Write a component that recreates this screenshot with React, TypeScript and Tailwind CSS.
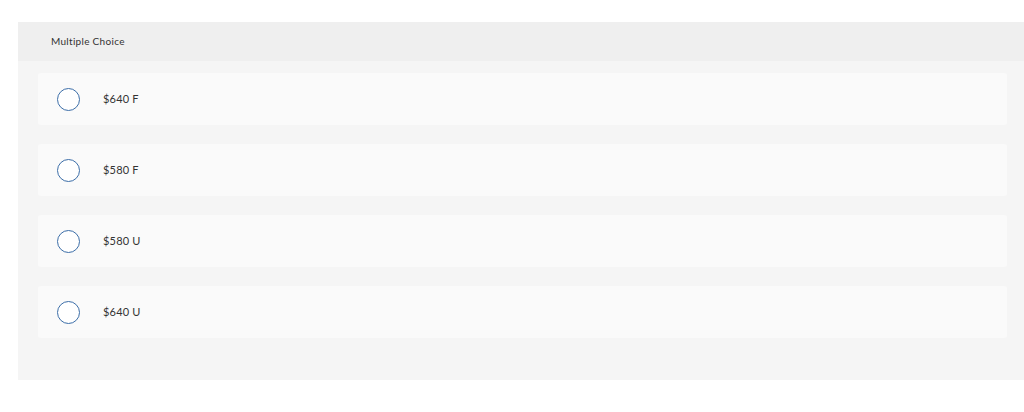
const choices = ["$640 F", "$580 F", "$580 U", "$640 U"];

export default function App() {
  return (
    <div className="w-[1024px] h-[412px] bg-white pt-[22px] pl-[18px] font-['Lato','Liberation_Sans',sans-serif]">
      <div className="w-[1006px] h-[358px] bg-[#f5f5f5] flex flex-col">
        {/* Header */}
        <div className="h-[39px] bg-[#efefef] flex items-center pl-[33px] text-[10px] tracking-[0.3px] text-[#333]">
          Multiple Choice
        </div>

        {/* Choices */}
        <div className="flex flex-col gap-[19px] pt-[12px] pl-[20px] pr-[17px]">
          {choices.map((c) => (
            <div
              key={c}
              className="h-[52px] bg-[#fafafa] rounded-[3px] flex items-center pl-[19px]"
            >
              <span className="w-[23px] h-[23px] rounded-full border border-[#3c6ea8] bg-white shrink-0" />
              <span className="ml-[23px] text-[11px] tracking-[0.2px] text-[#333]">{c}</span>
            </div>
          ))}
        </div>
      </div>
    </div>
  );
}
